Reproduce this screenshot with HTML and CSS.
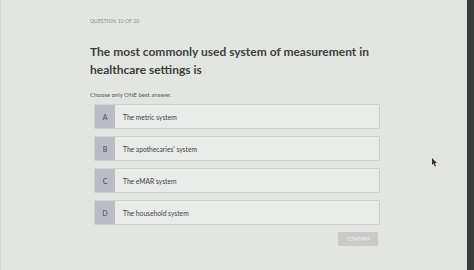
FILE: index.html
```html
<!DOCTYPE html>
<html lang="en">

<head>
    <meta charset="UTF-8">
    <title>Question 10 of 20</title>
    <link rel="stylesheet" href="styles.css">
</head>

<body>
    <div class="screen">
        <div class="quiz_wrap">
            <div class="counter">QUESTION 10 OF 20</div>
            <h1 class="question">The most commonly used system of measurement in healthcare settings is</h1>
            <p class="hint">Choose only ONE best answer.</p>
            <div class="options">
                <div class="option">
                    <div class="letter">A</div>
                    <div class="text">The metric system</div>
                </div>
                <div class="option">
                    <div class="letter">B</div>
                    <div class="text">The apothecaries' system</div>
                </div>
                <div class="option">
                    <div class="letter">C</div>
                    <div class="text">The eMAR system</div>
                </div>
                <div class="option">
                    <div class="letter">D</div>
                    <div class="text">The household system</div>
                </div>
            </div>
            <div class="bt_wrap">
                <span class="confirm">CONFIRM</span>
            </div>
        </div>
        <!-- mouse pointer -->
        <svg class="cursor" width="7" height="9" viewBox="0 0 7 9">
            <path d="M1 0 L1 7 L2.6 5.6 L3.8 8.4 L5 7.9 L3.8 5.2 L6 5 Z" fill="#333" />
        </svg>
    </div>
</body>

</html>
```
FILE: styles.css
```css
* {
    margin: 0;
    padding: 0;
    box-sizing: border-box;
}

body {
    width: 474px;
    height: 270px;
    overflow: hidden;
    background: #3a3d40;
    font-family: Lato, "Open Sans", sans-serif;
}

.screen {
    position: relative;
    width: 467px;
    height: 270px;
    background: #e3e5e1;
    border-left: 1px solid #d6d8d4;
}

.quiz_wrap {
    width: 290px;
    margin-left: 89px;
    padding-top: 18px;
}

.counter {
    font-size: 5px;
    color: #8a8d8c;
    letter-spacing: 0.1px;
}

.question {
    width: 300px;
    margin-top: 19px;
    font-size: 12px;
    font-weight: 700;
    line-height: 18px;
    color: #3c3e41;
}

.hint {
    margin-top: 12px;
    font-size: 6px;
    color: #55585a;
}

.options {
    display: flex;
    flex-direction: column;
    gap: 7px;
    margin-top: 6px;
    margin-left: 4px;
}

.option {
    display: flex;
    height: 25px;
    background: #e9ebe8;
    border: 1px solid #cfd1ce;
    border-radius: 1px;
}

.option .letter {
    width: 20px;
    display: flex;
    align-items: center;
    justify-content: center;
    background: #b9bcc4;
    color: #4a4d55;
    font-size: 7px;
}

.option .text {
    display: flex;
    align-items: center;
    padding-left: 8px;
    font-size: 6.7px;
    color: #3f4245;
}

.bt_wrap {
    display: flex;
    justify-content: flex-end;
    margin-top: 7px;
    padding-right: 2px;
}

.confirm {
    display: inline-block;
    width: 40px;
    height: 14px;
    line-height: 14px;
    text-align: center;
    background: #c9cac9;
    color: #f2f2f2;
    font-size: 5px;
    border-radius: 1px;
}

.cursor {
    position: absolute;
    left: 430px;
    top: 158px;
}
```
